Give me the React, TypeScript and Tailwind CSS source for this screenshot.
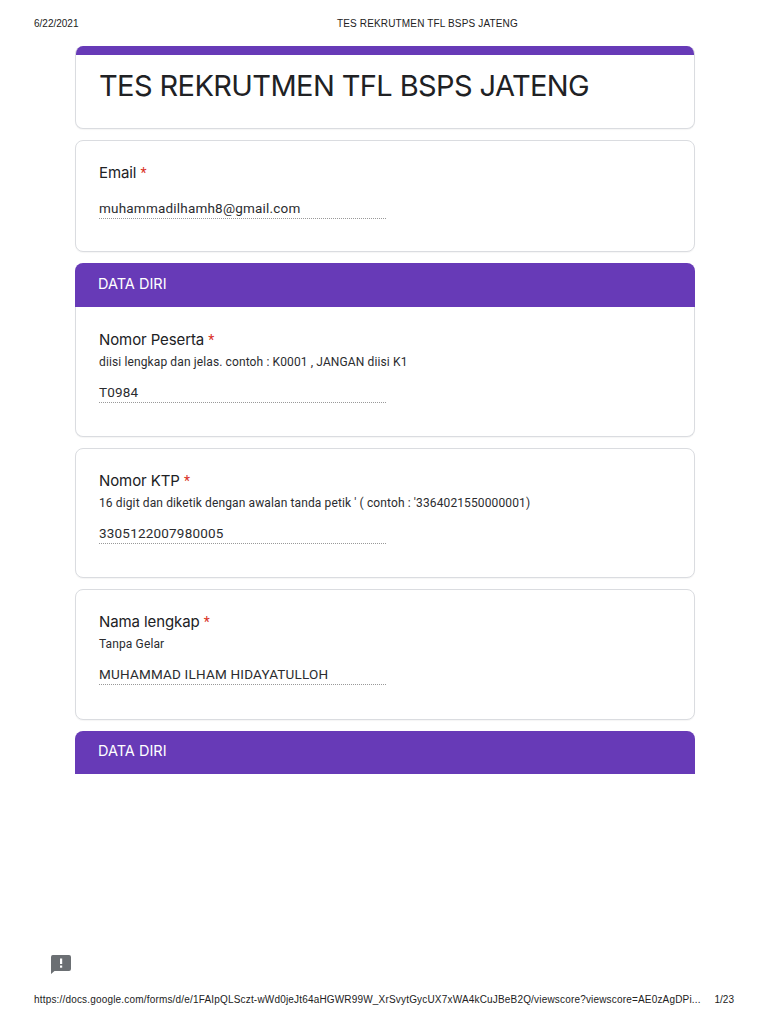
const sans = "font-['Roboto',sans-serif]";
const title = "font-['Inter','Noto_Sans',sans-serif]";
const print = "font-['Liberation_Sans',Arial,sans-serif]";

interface FieldCardProps {
  label: string;
  hint?: string;
  value: string;
  height: string;
  attached?: boolean;
}

function FieldCard({ label, hint, value, height, attached }: FieldCardProps) {
  return (
    <div
      className={`${height} ${attached ? 'rounded-b-lg border-t-0 pt-[23px]' : 'rounded-lg pt-[22px]'} border border-[#dadce0] bg-white pl-[23px] shadow-[0_1px_1px_rgba(0,0,0,0.04)]`}
    >
      <div className={`${title} text-[15px] leading-5 tracking-[-0.1px] text-[#202124]`}>
        {label} <span className={`${sans} text-[14px] text-[#d93025]`}>*</span>
      </div>
      {hint && (
        <div className={`${sans} mt-[3px] text-[12px] leading-[18px] tracking-[0.12px] text-[#2b2c2f]`}>{hint}</div>
      )}
      <div
        className={`${sans} ${hint ? 'mt-[12px]' : 'mt-[16px]'} w-[287px] border-b border-dotted border-[#999] text-[13.5px] leading-[19px] tracking-[0.2px] text-[#2b2c2f]`}
      >
        {value}
      </div>
    </div>
  );
}

function SectionHeader({ height }: { height: string }) {
  return (
    <div className={`${title} ${height} flex items-center rounded-t-lg bg-[#673ab7] pb-[3px] pl-[23px] text-[14.5px] text-white`}>
      DATA DIRI
    </div>
  );
}

export default function App() {
  return (
    <div className="flex h-[1024px] w-[768px] flex-col overflow-hidden bg-white">
      <div className={`${print} flex h-[46px] items-start px-[34px] pt-[18px] text-[10px] leading-3 text-[#222]`}>
        <span className="w-[100px]">6/22/2021</span>
        <span className="ml-[203px] tracking-[0.15px]">TES REKRUTMEN TFL BSPS JATENG</span>
      </div>

      <div className="mx-[75px] flex w-[620px] flex-col">
        <div className="h-[83px] overflow-hidden rounded-lg border border-t-0 border-[#dadce0] bg-white shadow-[0_1px_1px_rgba(0,0,0,0.04)]">
          <div className="h-[9px] bg-[#673ab7]" />
          <div className={`${title} pl-[23px] pt-[9px] text-[29px] leading-[44px] tracking-[-0.6px] text-[#202124]`}>
            TES REKRUTMEN TFL BSPS JATENG
          </div>
        </div>

        <div className="mt-[11px]">
          <FieldCard label="Email" value="muhammadilhamh8@gmail.com" height="h-[112px]" />
        </div>

        <div className="mt-[11px]">
          <SectionHeader height="h-[44px]" />
          <FieldCard
            label="Nomor Peserta"
            hint="diisi lengkap dan jelas. contoh : K0001 , JANGAN diisi K1"
            value="T0984"
            height="h-[130px]"
            attached
          />
        </div>

        <div className="mt-[11px] flex flex-col gap-[11px]">
          <FieldCard
            label="Nomor KTP"
            hint="16 digit dan diketik dengan awalan tanda petik ' ( contoh : '3364021550000001)"
            value="3305122007980005"
            height="h-[130px]"
          />
          <FieldCard label="Nama lengkap" hint="Tanpa Gelar" value="MUHAMMAD ILHAM HIDAYATULLOH" height="h-[131px]" />
        </div>

        <div className="mt-[11px]">
          <SectionHeader height="h-[43px]" />
        </div>
      </div>

      <div className="ml-[51px] mt-[181px]">
        <svg width="20" height="19" viewBox="0 0 20 19" aria-hidden="true">
          <path d="M1.8 0H18a2 2 0 0 1 2 2v12a2 2 0 0 1-2 2H3.5L0 19V2a2 2 0 0 1 1.8-2z" fill="#6b6f73" />
          <rect x="9" y="3.5" width="2.2" height="5.5" fill="#fff" />
          <rect x="9" y="10.5" width="2.2" height="2.2" fill="#fff" />
        </svg>
      </div>

      <div className={`${print} mt-[20px] flex justify-between px-[34px] text-[10px] leading-3 text-[#222]`}>
        <span className="tracking-[0.18px]">https://docs.google.com/forms/d/e/1FAIpQLSczt-wWd0jeJt64aHGWR99W_XrSvytGycUX7xWA4kCuJBeB2Q/viewscore?viewscore=AE0zAgDPi...</span>
        <span>1/23</span>
      </div>
    </div>
  );
}
